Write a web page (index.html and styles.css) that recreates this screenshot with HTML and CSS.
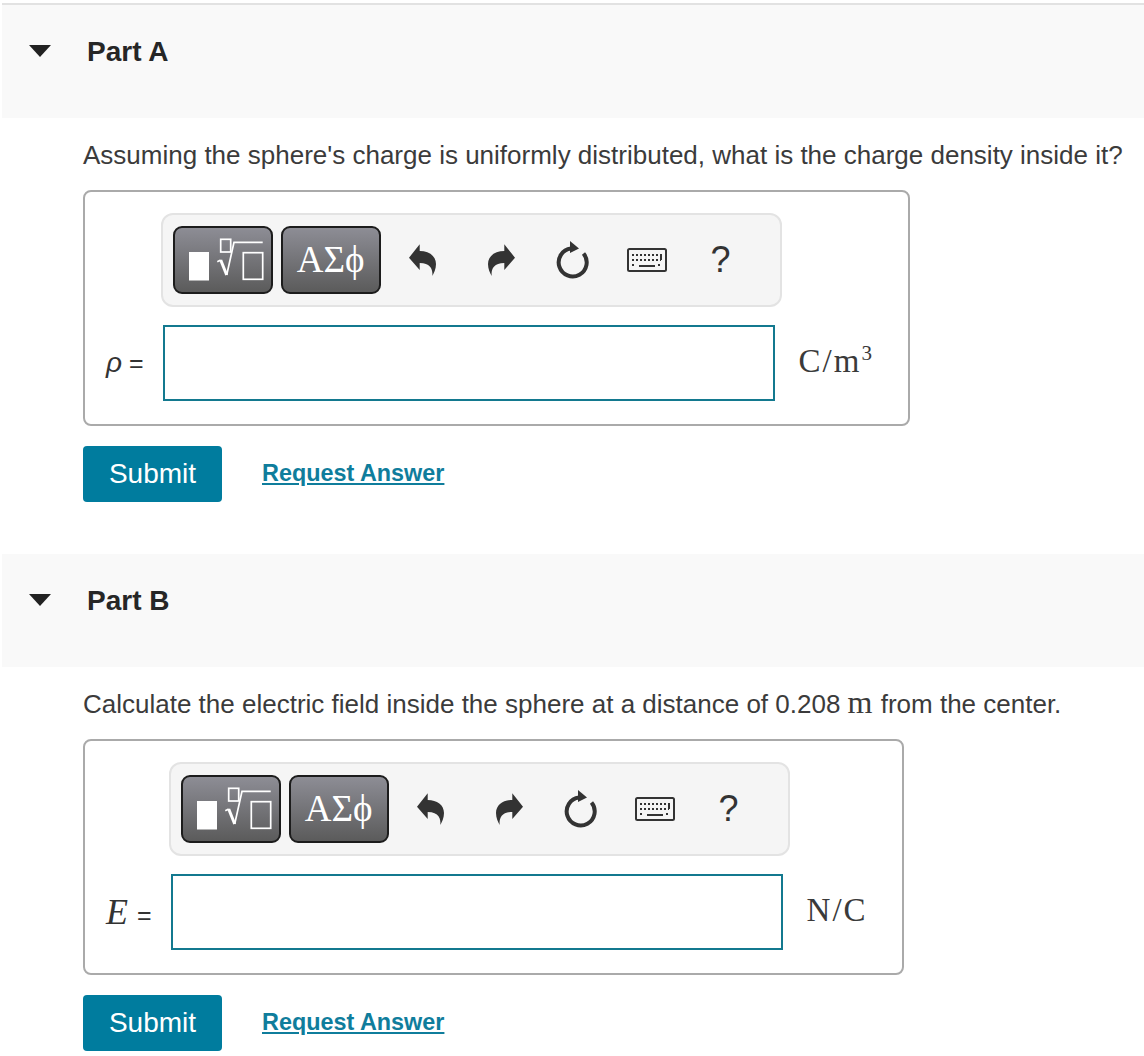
FILE: index.html
```html
<!DOCTYPE html>
<html lang="en">
<head>
    <meta charset="UTF-8">
    <title>Part A and Part B</title>
    <link rel="stylesheet" href="styles.css">
</head>
<body>
    <div class="page">
        <section class="part">
            <div class="part-head">
                <span class="caret"></span>
                <h2>Part A</h2>
            </div>
            <div class="part-body">
                <p class="question">Assuming the sphere's charge is uniformly distributed, what is the charge density inside it?</p>
                <div class="answer-box">
                    <div class="toolbar">
                        <button class="tool-btn">
                            <svg width="96" height="64" viewBox="0 0 96 64">
                                <rect x="14" y="24" width="20" height="28.5" fill="#fff"/>
                                <g fill="none" stroke="#fff" stroke-width="1.7">
                                    <rect x="45.7" y="11.3" width="10" height="12.7"/>
                                    <path d="M42.3 33.7 L45.7 32 M51.7 47 L59 14.3 H87.7"/>
                                    <rect x="68.3" y="24.7" width="19.4" height="26.6"/>
                                </g>
                                <path d="M45.7 32 L51.7 47" fill="none" stroke="#fff" stroke-width="3"/>
                            </svg>
                        </button>
                        <button class="tool-btn greek">ΑΣϕ</button>
                        <svg class="icon undo" width="28" height="32" viewBox="0 0 28 32">
                            <path d="M0 13.7 L10.7 .3 V7 C20 7 27 12 27 20 C27 25 25 29 23.3 32 C24 26 22 19 10.7 19 V26 Z" fill="#333"/>
                        </svg>
                        <svg class="icon redo" width="28" height="32" viewBox="0 0 28 32">
                            <path transform="matrix(-1 0 0 1 28 0)" d="M0 13.7 L10.7 .3 V7 C20 7 27 12 27 20 C27 25 25 29 23.3 32 C24 26 22 19 10.7 19 V26 Z" fill="#333"/>
                        </svg>
                        <svg class="icon refresh" width="34" height="38" viewBox="0 0 34 38">
                            <path d="M28.5 12.5 A14 14 0 1 1 16 7.5" fill="none" stroke="#333" stroke-width="4"/>
                            <path d="M15 0 L24 7.5 L15 12 Z" fill="#333"/>
                        </svg>
                        <svg class="icon keys" width="40" height="24" viewBox="0 0 40 24">
                            <rect x="1" y="1" width="38" height="22" rx="1.5" fill="#f5f5f5" stroke="#333" stroke-width="2"/>
                            <path d="M5 7 H32 M5 12 H34 M5 17 H8 M31 17 H35" stroke="#333" stroke-width="2" stroke-dasharray="2 2" fill="none"/>
                            <path d="M34 6 V12 M12 18 H28" stroke="#333" stroke-width="2" fill="none"/>
                        </svg>
                        <span class="help">?</span>
                    </div>
                    <label class="var-label"><i class="rho">ρ</i> <span>=</span></label>
                    <input class="answer-input" type="text">
                    <span class="unit">C/m<sup>3</sup></span>
                </div>
                <div class="actions">
                    <button class="submit">Submit</button>
                    <a class="request" href="#">Request Answer</a>
                </div>
            </div>
        </section>

        <section class="part part-second">
            <div class="part-head">
                <span class="caret"></span>
                <h2>Part B</h2>
            </div>
            <div class="part-body">
                <p class="question">Calculate the electric field inside the sphere at a distance of 0.208 <span class="math">m</span> from the center.</p>
                <div class="answer-box">
                    <div class="toolbar">
                        <button class="tool-btn">
                            <svg width="96" height="64" viewBox="0 0 96 64">
                                <rect x="14" y="24" width="20" height="28.5" fill="#fff"/>
                                <g fill="none" stroke="#fff" stroke-width="1.7">
                                    <rect x="45.7" y="11.3" width="10" height="12.7"/>
                                    <path d="M42.3 33.7 L45.7 32 M51.7 47 L59 14.3 H87.7"/>
                                    <rect x="68.3" y="24.7" width="19.4" height="26.6"/>
                                </g>
                                <path d="M45.7 32 L51.7 47" fill="none" stroke="#fff" stroke-width="3"/>
                            </svg>
                        </button>
                        <button class="tool-btn greek">ΑΣϕ</button>
                        <svg class="icon undo" width="28" height="32" viewBox="0 0 28 32">
                            <path d="M0 13.7 L10.7 .3 V7 C20 7 27 12 27 20 C27 25 25 29 23.3 32 C24 26 22 19 10.7 19 V26 Z" fill="#333"/>
                        </svg>
                        <svg class="icon redo" width="28" height="32" viewBox="0 0 28 32">
                            <path transform="matrix(-1 0 0 1 28 0)" d="M0 13.7 L10.7 .3 V7 C20 7 27 12 27 20 C27 25 25 29 23.3 32 C24 26 22 19 10.7 19 V26 Z" fill="#333"/>
                        </svg>
                        <svg class="icon refresh" width="34" height="38" viewBox="0 0 34 38">
                            <path d="M28.5 12.5 A14 14 0 1 1 16 7.5" fill="none" stroke="#333" stroke-width="4"/>
                            <path d="M15 0 L24 7.5 L15 12 Z" fill="#333"/>
                        </svg>
                        <svg class="icon keys" width="40" height="24" viewBox="0 0 40 24">
                            <rect x="1" y="1" width="38" height="22" rx="1.5" fill="#f5f5f5" stroke="#333" stroke-width="2"/>
                            <path d="M5 7 H32 M5 12 H34 M5 17 H8 M31 17 H35" stroke="#333" stroke-width="2" stroke-dasharray="2 2" fill="none"/>
                            <path d="M34 6 V12 M12 18 H28" stroke="#333" stroke-width="2" fill="none"/>
                        </svg>
                        <span class="help">?</span>
                    </div>
                    <label class="var-label"><i class="var-e">E</i> <span>=</span></label>
                    <input class="answer-input" type="text">
                    <span class="unit">N/C</span>
                </div>
                <div class="actions">
                    <button class="submit">Submit</button>
                    <a class="request" href="#">Request Answer</a>
                </div>
            </div>
        </section>
    </div>
</body>
</html>
```

FILE: styles.css
```css
body {
    margin: 0;
    font-family: "Liberation Sans", Arial, sans-serif;
    color: #333;
    background-color: #fff;
}

.page {
    padding: 3px 0 0 2px;
}

.part {
    border-top: 2px solid #e2e2e2;
}

.part-second {
    border-top: none;
    margin-top: 52px;
}

.part-head {
    display: flex;
    height: 113px;
    background-color: #f9f9f9;
    padding-left: 27px;
}

.caret {
    width: 0;
    height: 0;
    margin-top: 40px;
    border-left: 11px solid transparent;
    border-right: 11px solid transparent;
    border-top: 12px solid #222;
}

h2 {
    margin: 31px 0 0 36px;
    font-size: 28px;
    line-height: 32px;
    font-weight: bold;
    color: #262626;
}

.part-body {
    padding-left: 81px;
}

.question {
    margin: 20px 0 18px;
    font-size: 26px;
    line-height: 34px;
    white-space: nowrap;
    color: #3b3b3b;
}

.math {
    margin-right: 1px;
    font-family: "Liberation Serif", serif;
    font-size: 32px;
    line-height: 20px;
}

.answer-box {
    display: inline-grid;
    grid-template-columns: auto 612px auto;
    align-items: center;
    padding: 21px 34px 23px 21px;
    border: 2px solid #aaa;
    border-radius: 8px;
    vertical-align: top;
}

.toolbar {
    grid-column: 2;
    justify-self: start;
    display: flex;
    align-items: center;
    box-sizing: border-box;
    width: 621px;
    height: 94px;
    margin: 0 0 18px -2px;
    padding-left: 10px;
    background-color: #f5f5f5;
    border: 2px solid #e3e3e3;
    border-radius: 12px;
}

.tool-btn {
    box-sizing: border-box;
    width: 100px;
    height: 68px;
    padding: 0;
    margin-right: 8px;
    border: 2px solid #1c1c1c;
    border-radius: 9px;
    background: linear-gradient(#8d8d95, #5b5b5b);
    color: #fff;
}

.tool-btn svg {
    display: block;
}

.greek {
    font-family: "Liberation Serif", serif;
    font-size: 37px;
    line-height: 60px;
}

.icon {
    flex: none;
}

.undo {
    margin-left: 20px;
}

.redo {
    margin-left: 50px;
}

.refresh {
    margin-left: 40px;
}

.keys {
    margin-left: 38px;
}

.help {
    margin-left: 44px;
    font-size: 36px;
}

.var-label {
    grid-column: 1;
    grid-row: 2;
    padding-right: 19px;
    font-size: 25px;
    white-space: nowrap;
}

.rho {
    font-size: 28px;
}

.var-e {
    margin-right: 2px;
    font-family: "Liberation Serif", serif;
    font-size: 36px;
}

.answer-input {
    grid-column: 2;
    grid-row: 2;
    box-sizing: border-box;
    width: 612px;
    height: 76px;
    padding: 0 10px;
    border: 2px solid #13798f;
    background-color: #fff;
    outline: none;
}

.unit {
    grid-column: 3;
    grid-row: 2;
    padding: 0 0 3px 24px;
    font-family: "Liberation Serif", serif;
    font-size: 33px;
    letter-spacing: 2px;
    color: #3a3a3a;
}

.unit sup {
    font-size: 21px;
    line-height: 0;
}

.actions {
    display: flex;
    align-items: center;
    margin-top: 20px;
}

.submit {
    width: 139px;
    height: 56px;
    padding: 0;
    border: none;
    border-radius: 4px;
    background-color: #007c9e;
    color: #fff;
    font-family: "Liberation Sans", Arial, sans-serif;
    font-size: 28px;
}

.request {
    margin-left: 40px;
    padding-bottom: 2px;
    font-size: 23.4px;
    font-weight: bold;
    color: #0f7d9c;
}
```
